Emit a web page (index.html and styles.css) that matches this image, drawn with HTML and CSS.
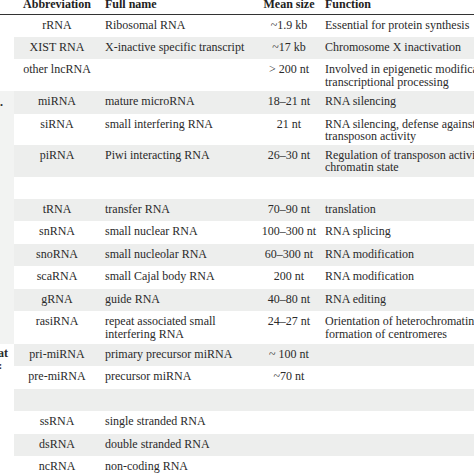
FILE: index.html
```html
<!DOCTYPE html>
<html>
<head>
<meta charset="utf-8">
<link rel="stylesheet" href="styles.css">
</head>
<body>
<div class="frame">
<table class="rna">
  <colgroup>
    <col class="c-cat"><col class="c-abbr"><col class="c-full"><col class="c-mean"><col class="c-func">
  </colgroup>
  <thead>
    <tr class="head">
      <th class="cat"></th>
      <th class="abbr">Abbreviation</th>
      <th class="full">Full name</th>
      <th class="mean">Mean size</th>
      <th class="func">Function</th>
    </tr>
  </thead>
  <tbody>
    <tr class="h1">
      <td class="cat" rowspan="3"></td>
      <td class="abbr">rRNA</td><td class="full">Ribosomal RNA</td><td class="mean">~1.9 kb</td><td class="func">Essential for protein synthesis</td>
    </tr>
    <tr class="h1 g">
      <td class="abbr">XIST RNA</td><td class="full">X-inactive specific transcript</td><td class="mean">~17 kb</td><td class="func">Chromosome X inactivation</td>
    </tr>
    <tr class="h2a">
      <td class="abbr">other lncRNA</td><td class="full"></td><td class="mean">&gt; 200 nt</td><td class="func">Involved in epigenetic modification and<br>transcriptional processing</td>
    </tr>
    <tr class="h1 g">
      <td class="cat shade" rowspan="10"><span class="lab-small">Small RNA.</span></td>
      <td class="abbr">miRNA</td><td class="full">mature microRNA</td><td class="mean">18–21 nt</td><td class="func">RNA silencing</td>
    </tr>
    <tr class="h2b">
      <td class="abbr">siRNA</td><td class="full">small interfering RNA</td><td class="mean">21 nt</td><td class="func">RNA silencing, defense against viruses,<br>transposon activity</td>
    </tr>
    <tr class="h2a g">
      <td class="abbr">piRNA</td><td class="full">Piwi interacting RNA</td><td class="mean">26–30 nt</td><td class="func">Regulation of transposon activity and<br>chromatin state</td>
    </tr>
    <tr class="h1">
      <td class="abbr"></td><td class="full"></td><td class="mean"></td><td class="func"></td>
    </tr>
    <tr class="h1 g">
      <td class="abbr">tRNA</td><td class="full">transfer RNA</td><td class="mean">70–90 nt</td><td class="func">translation</td>
    </tr>
    <tr class="h1">
      <td class="abbr">snRNA</td><td class="full">small nuclear RNA</td><td class="mean">100–300 nt</td><td class="func">RNA splicing</td>
    </tr>
    <tr class="h1 g">
      <td class="abbr">snoRNA</td><td class="full">small nucleolar RNA</td><td class="mean">60–300 nt</td><td class="func">RNA modification</td>
    </tr>
    <tr class="h1">
      <td class="abbr">scaRNA</td><td class="full">small Cajal body RNA</td><td class="mean">200 nt</td><td class="func">RNA modification</td>
    </tr>
    <tr class="h1 g">
      <td class="abbr">gRNA</td><td class="full">guide RNA</td><td class="mean">40–80 nt</td><td class="func">RNA editing</td>
    </tr>
    <tr class="h2c">
      <td class="abbr">rasiRNA</td><td class="full">repeat associated small<br>interfering RNA</td><td class="mean">24–27 nt</td><td class="func">Orientation of heterochromatin<br>formation of centromeres</td>
    </tr>
    <tr class="h1 g">
      <td class="cat" rowspan="2"><span class="lab-inter">Intermediat<br><span class="tail">s:</span></span></td>
      <td class="abbr">pri-miRNA</td><td class="full">primary precursor miRNA</td><td class="mean">~ 100 nt</td><td class="func"></td>
    </tr>
    <tr class="h1">
      <td class="abbr">pre-miRNA</td><td class="full">precursor miRNA</td><td class="mean">~70 nt</td><td class="func"></td>
    </tr>
    <tr class="h1 g">
      <td class="cat" rowspan="4"></td>
      <td class="abbr"></td><td class="full"></td><td class="mean"></td><td class="func"></td>
    </tr>
    <tr class="h1">
      <td class="abbr">ssRNA</td><td class="full">single stranded RNA</td><td class="mean"></td><td class="func"></td>
    </tr>
    <tr class="h1 g">
      <td class="abbr">dsRNA</td><td class="full">double stranded RNA</td><td class="mean"></td><td class="func"></td>
    </tr>
    <tr class="h1">
      <td class="abbr">ncRNA</td><td class="full">non-coding RNA</td><td class="mean"></td><td class="func"></td>
    </tr>
  </tbody>
</table>
</div>
</body>
</html>
```

FILE: styles.css
```css
html, body {
  margin: 0;
  padding: 0;
  background: #ffffff;
}
body {
  width: 474px;
  height: 474px;
  overflow: hidden;
}
.frame {
  width: 474px;
  height: 474px;
  overflow: hidden;
}
.rna {
  margin-left: -86px;
  border-collapse: collapse;
  border-spacing: 0;
  table-layout: fixed;
  width: 566px;
  font-family: "Liberation Serif", "DejaVu Serif", serif;
  font-size: 12px;
  color: #2a2a2a;
}
.c-cat { width: 100px; }
.c-abbr { width: 86px; }
.c-full { width: 158px; }
.c-mean { width: 62px; }
.c-func { width: 160px; }

.rna th, .rna td {
  padding: 0;
  vertical-align: top;
  white-space: nowrap;
  overflow: hidden;
}
.rna td {
  padding-top: 4px;
  line-height: 12.8px;
}
.head th {
  height: 14px;
  line-height: 9px;
  font-weight: bold;
  border-bottom: 1px solid #333;
  color: #222;
}
.abbr { text-align: center; }
.full { text-align: left; padding-left: 5px !important; }
.mean { text-align: center; }
.func { text-align: left; padding-left: 5px !important; }

.h1 { height: 22.4px; }
.h2a { height: 32px; }
.h2b { height: 31px; }
.h2c { height: 33px; }

.g td { background: #edeeed; }
.g td.cat { background: #ffffff; }
.rna td.cat.shade { background: #f2f3f2; }

.rna td.cat {
  text-align: right;
  font-weight: bold;
  padding-top: 3px;
  line-height: 12px;
}
.lab-small {
  display: block;
  margin-right: 11px;
  margin-top: 2px;
}
.lab-inter {
  display: block;
  margin-right: 6px;
}
.tail {
  display: inline-block;
  margin-right: 6px;
  font-size: 10px;
}
```
